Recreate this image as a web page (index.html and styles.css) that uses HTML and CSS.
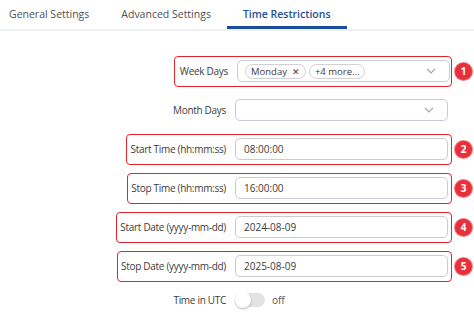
FILE: index.html
```html
<!DOCTYPE html>
<html>
<head>
<meta charset="utf-8">
<link rel="stylesheet" href="styles.css">
</head>
<body>
<div class="tabs">
  <div class="tab">General Settings</div>
  <div class="tab">Advanced Settings</div>
  <div class="tab active">Time Restrictions</div>
</div>
<div class="form">
  <div class="row">
    <div class="field mark wide">
      <span class="label">Week Days</span>
      <div class="input select">
        <span class="chip">Monday <span class="x">✕</span></span>
        <span class="chip">+4 more...</span>
        <svg class="chev" width="10" height="6" viewBox="0 0 10 6"><path d="M1 1l4 4 4-4" fill="none" stroke="#a0a4ad" stroke-width="1.1"/></svg>
      </div>
    </div>
    <span class="badge">1</span>
  </div>
  <div class="row">
    <div class="field">
      <span class="label">Month Days</span>
      <div class="input select">
        <svg class="chev" width="10" height="6" viewBox="0 0 10 6"><path d="M1 1l4 4 4-4" fill="none" stroke="#a0a4ad" stroke-width="1.1"/></svg>
      </div>
    </div>
    <span class="badge hidden"></span>
  </div>
  <div class="row">
    <div class="field mark">
      <span class="label">Start Time (hh:mm:ss)</span>
      <div class="input">08:00:00</div>
    </div>
    <span class="badge">2</span>
  </div>
  <div class="row">
    <div class="field mark">
      <span class="label">Stop Time (hh:mm:ss)</span>
      <div class="input">16:00:00</div>
    </div>
    <span class="badge">3</span>
  </div>
  <div class="row">
    <div class="field mark">
      <span class="label">Start Date (yyyy-mm-dd)</span>
      <div class="input">2024-08-09</div>
    </div>
    <span class="badge">4</span>
  </div>
  <div class="row">
    <div class="field mark">
      <span class="label">Stop Date (yyyy-mm-dd)</span>
      <div class="input">2025-08-09</div>
    </div>
    <span class="badge">5</span>
  </div>
  <div class="row short">
    <div class="field">
      <span class="label">Time in UTC</span>
      <div class="toggle-wrap">
        <span class="toggle"><span class="knob"></span></span>
        <span class="off">off</span>
      </div>
    </div>
    <span class="badge hidden"></span>
  </div>
</div>
</body>
</html>
```

FILE: styles.css
```css
html, body {
  margin: 0;
  padding: 0;
  background: #fff;
  font-family: "Open Sans", "Noto Sans", sans-serif;
  color: #3c3c3c;
}
.tabs {
  display: flex;
  height: 29px;
  border-bottom: 2px solid #eef0f2;
}
.tab {
  padding: 7px 16px 0;
  font-size: 10.5px;
  color: #505050;
  white-space: nowrap;
}
.tab:first-child {
  padding-left: 9px;
}
.tab.active {
  color: #1e4f96;
  font-weight: 600;
  border-bottom: 3px solid #1a4d99;
  margin-bottom: -2px;
  height: 19px;
}
.form {
  display: flex;
  flex-direction: column;
  gap: 7px;
  padding-top: 24px;
}
.row {
  display: flex;
  justify-content: flex-end;
  align-items: center;
  height: 32px;
  padding-right: 2px;
  gap: 3px;
}
.row.short {
  height: 22px;
}
.field {
  display: flex;
  align-items: center;
  gap: 9px;
  padding: 3.5px 3px 3.5px 3px;
  border: 1.5px solid transparent;
  border-radius: 4px;
}
.field.mark {
  border-color: #e3222f;
}
.field.wide {
  padding-left: 5px;
  padding-right: 1px;
}
.label {
  font-size: 10px;
  letter-spacing: -0.3px;
  color: #3c3c3c;
  white-space: nowrap;
}
.input {
  box-sizing: border-box;
  width: 213px;
  height: 22px;
  border: 1px solid #c9cad3;
  border-radius: 5px;
  padding: 0 8px;
  font-size: 10px;
  color: #3c3c3c;
  display: flex;
  align-items: center;
}
.select {
  padding-left: 7px;
  gap: 3px;
}
.chip {
  border: 1px solid #cfd1d6;
  border-radius: 8px;
  height: 15px;
  box-sizing: border-box;
  padding: 0 5px;
  font-size: 9.5px;
  display: inline-flex;
  align-items: center;
  gap: 5px;
  color: #3c3c3c;
}
.x {
  font-size: 8.5px;
  color: #444;
}
.chev {
  margin-left: auto;
  margin-right: 5px;
}
.badge {
  width: 17px;
  height: 17px;
  border-radius: 50%;
  background: #e8303a;
  color: #fff;
  font-size: 10px;
  font-weight: 700;
  display: flex;
  align-items: center;
  justify-content: center;
  box-shadow: 0 0 0 1px #f27b80;
}
.badge.hidden {
  visibility: hidden;
}
.toggle-wrap {
  width: 213px;
  display: flex;
  align-items: center;
  gap: 7px;
}
.toggle {
  width: 30px;
  height: 14px;
  border-radius: 7px;
  background: #e2e3e5;
  position: relative;
}
.knob {
  position: absolute;
  left: 0;
  top: -1px;
  width: 16px;
  height: 16px;
  border-radius: 50%;
  background: #fff;
  box-shadow: 0 1px 2px rgba(0,0,0,0.3);
}
.off {
  font-size: 10px;
  color: #555;
}
```
